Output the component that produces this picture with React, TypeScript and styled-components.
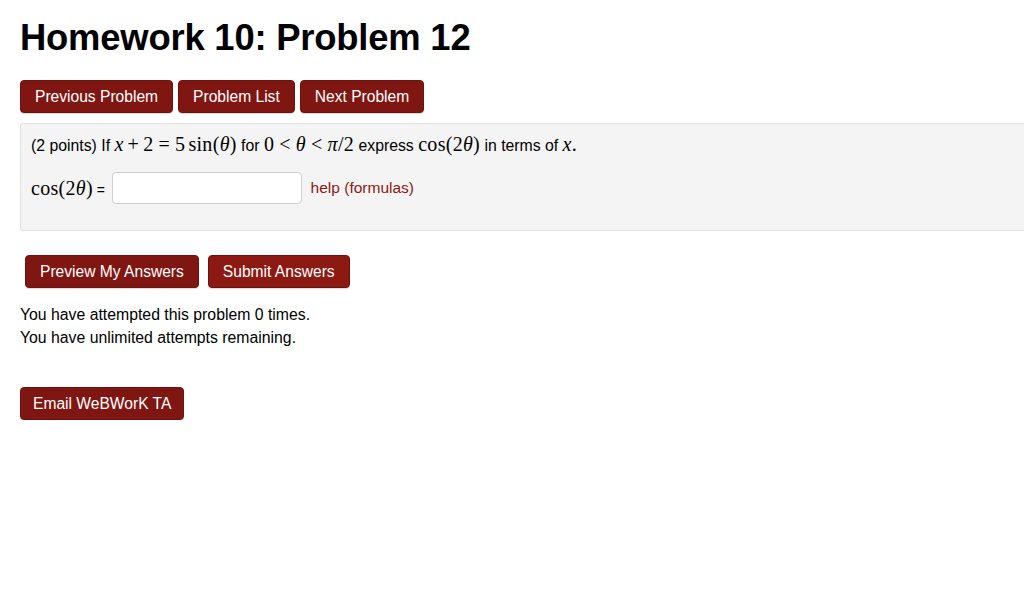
import React from "react";
import styled, { createGlobalStyle } from "styled-components";

const Global = createGlobalStyle`
  html, body { margin: 0; padding: 0; background: #fff; }
  body { font-family: "Liberation Sans", Arial, Helvetica, sans-serif; color: #000; overflow: hidden; }
`;

const Page = styled.div`
  padding: 18px 0 0 20px;
`;

const Title = styled.h1`
  margin: 0;
  font-size: 36.4px;
  font-weight: bold;
  line-height: 40px;
  letter-spacing: -0.2px;
`;

const NavBar = styled.div`
  display: flex;
  gap: 5px;
  margin-top: 22px;
`;

const Button = styled.button<{ $tone?: "dark" | "light" }>`
  font-family: "Liberation Sans", Arial, Helvetica, sans-serif;
  font-size: 15.6px;
  color: #fff;
  height: 33px;
  padding: 0 14px;
  border: 1px solid #6a120d;
  border-radius: 4px;
  background: ${(p) => (p.$tone === "light" ? "#8c1a13" : "#801611")};
  box-shadow: 0 1px 1px rgba(0, 0, 0, 0.15);
  cursor: pointer;
`;

const ProblemBox = styled.div`
  margin-top: 10px;
  margin-right: -4px;
  background: #f4f4f4;
  border: 1px solid #e2e2e2;
  border-right: none;
  border-radius: 3px 0 0 3px;
  padding: 10px 10px 26px 10px;
  font-size: 15.8px;
`;

const Statement = styled.div`
  line-height: 20px;
  white-space: nowrap;
`;

/* TeX-style inline math */
const M = styled.span`
  font-family: "Liberation Serif", "Times New Roman", serif;
  font-size: 20px;
  line-height: 1;
  letter-spacing: 0.3px;
`;

const Mi = styled.span`
  font-style: italic;
`;

const Op = styled.span<{ $rel?: boolean }>`
  margin: 0 ${(p) => (p.$rel ? 5 : 4)}px;
`;

const Fn = styled.span`
  margin-left: 3px;
`;

const AnswerRow = styled.div`
  display: flex;
  align-items: center;
  margin-top: 16px;
`;

const Label = styled.span`
  margin-right: 7px;
  font-size: 14px;
  letter-spacing: -0.2px;
`;

const Input = styled.input`
  width: 190px;
  height: 32px;
  box-sizing: border-box;
  border: 1px solid #cdcdcd;
  border-radius: 4px;
  background: #fff;
  margin-right: 9px;
`;

const Help = styled.a`
  color: #8c1a13;
  text-decoration: none;
  font-size: 15.5px;
`;

const SubmitBar = styled.div`
  display: flex;
  gap: 9px;
  margin: 24px 0 0 5px;
`;

const Note = styled.div`
  margin-top: 15px;
  font-size: 15.8px;
  line-height: 23px;
`;

const Footer = styled.div`
  margin-top: 38px;
  & > button {
    padding: 0 12px;
  }
`;

export default function App() {
  return (
    <Page>
      <Global />
      <Title>Homework 10: Problem 12</Title>
      <NavBar>
        <Button>Previous Problem</Button>
        <Button>Problem List</Button>
        <Button>Next Problem</Button>
      </NavBar>
      <ProblemBox>
        <Statement>
          (2 points) If{" "}
          <M>
            <Mi>x</Mi>
            <Op>+</Op>2<Op $rel>=</Op>5<Fn>sin</Fn>(<Mi>θ</Mi>)
          </M>{" "}
          for{" "}
          <M>
            0<Op $rel>&lt;</Op>
            <Mi>θ</Mi>
            <Op $rel>&lt;</Op>
            <Mi>π</Mi>/2
          </M>{" "}
          express{" "}
          <M>
            cos(2<Mi>θ</Mi>)
          </M>{" "}
          in terms of{" "}
          <M>
            <Mi>x</Mi>.
          </M>
        </Statement>
        <AnswerRow>
          <Label>
            <M>
              cos(2<Mi>θ</Mi>)
            </M>{" "}
            =
          </Label>
          <Input type="text" />
          <Help href="#">help (formulas)</Help>
        </AnswerRow>
      </ProblemBox>
      <SubmitBar>
        <Button>Preview My Answers</Button>
        <Button $tone="light">Submit Answers</Button>
      </SubmitBar>
      <Note>
        You have attempted this problem 0 times.
        <br />
        You have unlimited attempts remaining.
      </Note>
      <Footer>
        <Button>Email WeBWorK TA</Button>
      </Footer>
    </Page>
  );
}
